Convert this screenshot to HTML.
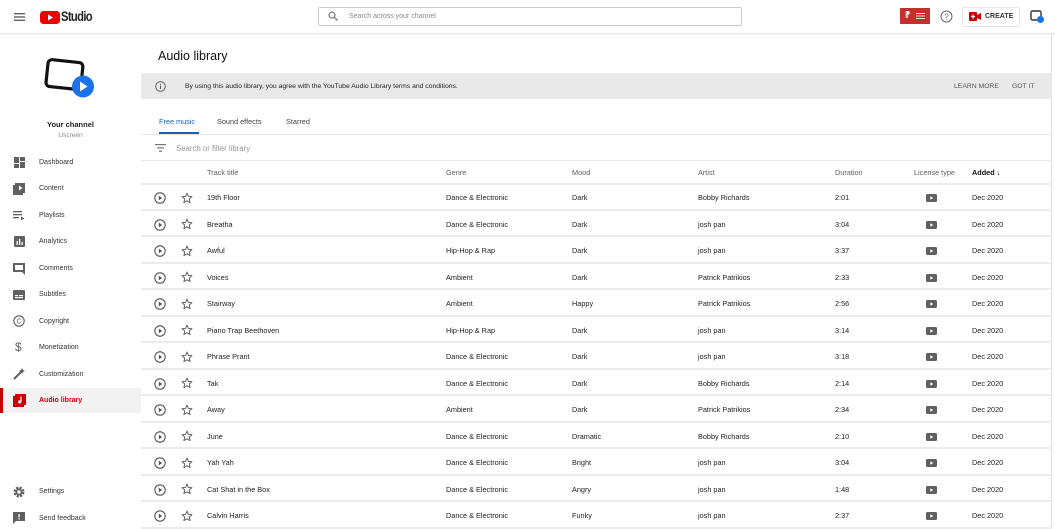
<!DOCTYPE html>
<html><head><meta charset="utf-8">
<style>
*{margin:0;padding:0;box-sizing:border-box}
body{width:1055px;height:529px;overflow:hidden;background:#fff;font-family:"Liberation Sans",Arial,sans-serif;color:#0d0d0d;position:relative}
.a{position:absolute;white-space:nowrap}
.sb{font-size:7px;color:#333}
.row{position:absolute;left:141px;width:911px;height:26.5px;border-bottom:2px solid #ececec}
.c{position:absolute;top:1px;line-height:26px;font-size:7.3px;color:#222}
.h{color:#606060}
</style></head><body>
<div class="a" style="left:0;top:0;width:1055px;height:34px;border-bottom:1px solid #e5e5e5;box-shadow:0 1px 2px rgba(0,0,0,.06)"></div>
<svg class="a" style="left:14px;top:13px" width="11" height="8"><rect y="0" width="11" height="1.4" fill="#606060"/><rect y="3.3" width="11" height="1.4" fill="#606060"/><rect y="6.6" width="11" height="1.4" fill="#606060"/></svg>
<svg class="a" style="left:40px;top:11px" width="20" height="13"><rect width="20" height="13" rx="3.5" fill="#e00"/><path d="M8 3.5L13 6.5L8 9.5Z" fill="#fff"/></svg>
<div class="a" style="left:61px;top:8px;font-size:14px;font-weight:bold;letter-spacing:-0.8px;color:#222;transform:scaleX(.8);transform-origin:left">Studio</div>
<div class="a" style="left:318px;top:7px;width:424px;height:19px;border:1px solid #ccc;border-radius:2px"></div>
<svg class="a" style="left:328px;top:11px" width="10" height="10"><circle cx="4" cy="4" r="3" stroke="#777" stroke-width="1.2" fill="none"/><path d="M6.2 6.2L9.5 9.5" stroke="#777" stroke-width="1.3"/></svg>
<div class="a" style="left:349px;top:13px;font-size:7px;color:#888">Search across your channel</div>
<div class="a" style="left:900px;top:8px;width:30px;height:16px;background:#c4302b;border-radius:1px"></div>
<div class="a" style="left:905px;top:10px;font-size:8px;font-weight:bold;color:#fff">⁋</div>
<svg class="a" style="left:916px;top:13px" width="9" height="6"><rect width="9" height="1" fill="#fff" opacity=".8"/><rect y="2.5" width="9" height="1" fill="#fff" opacity=".8"/><rect y="5" width="9" height="1" fill="#fff" opacity=".8"/></svg>
<svg class="a" style="left:940px;top:10px" width="13" height="13"><circle cx="6.5" cy="6.5" r="5.5" stroke="#666" stroke-width="1" fill="none"/><text x="6.5" y="9.3" font-size="8" text-anchor="middle" fill="#666" font-family="Liberation Sans">?</text></svg>
<div class="a" style="left:962px;top:7px;width:58px;height:20px;border:1px solid #e5e5e5;border-radius:2px"></div>
<svg class="a" style="left:969px;top:12px" width="12" height="9"><rect width="8" height="9" rx="1" fill="#c00"/><path d="M8 3L12 1V8L8 6Z" fill="#c00"/><path d="M4 2.5V6.5M2 4.5H6" stroke="#fff" stroke-width="1.2"/></svg>
<div class="a" style="left:985px;top:13px;font-size:7px;font-weight:bold;color:#333">CREATE</div>
<svg class="a" style="left:1030px;top:9px" width="15" height="15"><rect x="1" y="2" width="10" height="9" rx="1.5" stroke="#333" stroke-width="1.4" fill="none"/><circle cx="10.5" cy="10.5" r="3.5" fill="#1a73e8"/></svg>

<svg class="a" style="left:44px;top:58px" width="52" height="42"><rect x="3" y="3" width="35" height="27" rx="4" transform="rotate(6 20 16)" stroke="#111" stroke-width="3.2" fill="none"/><circle cx="39" cy="28.5" r="11" fill="#1a73e8"/><path d="M36 23.5L43.5 28.5L36 33.5Z" fill="#fff"/></svg>
<div class="a" style="left:0;width:141px;top:120px;text-align:center;font-size:7.5px;font-weight:bold;color:#222">Your channel</div>
<div class="a" style="left:0;width:141px;top:132px;text-align:center;font-size:6.5px;color:#888">Uscreen</div>

<div class="a" style="left:0;top:388px;width:141px;height:25px;background:#f2f2f2"></div>
<div class="a" style="left:0;top:388px;width:3px;height:25px;background:#c00"></div>

<svg class="a" style="left:14px;top:157px" width="11" height="11" fill="#606060"><rect width="5" height="6"/><rect x="6" width="5" height="4"/><rect y="7" width="5" height="4"/><rect x="6" y="5" width="5" height="6"/></svg>
<div class="a sb" style="left:39px;top:159px">Dashboard</div>
<svg class="a" style="left:13px;top:183px" width="12" height="12" fill="#606060"><rect x="0" y="2" width="2" height="10"/><rect x="0" y="10" width="10" height="2"/><rect x="2" y="0" width="10" height="10"/><path d="M6 2.5L9.5 5L6 7.5Z" fill="#fff"/></svg>
<div class="a sb" style="left:39px;top:185px">Content</div>
<svg class="a" style="left:13px;top:211px" width="12" height="9" fill="#606060"><rect width="9" height="1.3"/><rect y="3" width="9" height="1.3"/><rect y="6" width="6" height="1.3"/><path d="M8 5.5L11.5 7.5L8 9.5Z"/></svg>
<div class="a sb" style="left:39px;top:212px">Playlists</div>
<svg class="a" style="left:14px;top:236px" width="11" height="11"><rect width="11" height="11" rx="1" fill="#606060"/><rect x="2.5" y="5" width="1.3" height="4" fill="#fff"/><rect x="5" y="3" width="1.3" height="6" fill="#fff"/><rect x="7.5" y="6" width="1.3" height="3" fill="#fff"/></svg>
<div class="a sb" style="left:39px;top:238px">Analytics</div>
<svg class="a" style="left:13px;top:263px" width="12" height="12"><path d="M0 0H12V12L9 9H0Z" fill="#606060"/><rect x="2" y="2" width="8" height="5" fill="#fff"/></svg>
<div class="a sb" style="left:39px;top:265px">Comments</div>
<svg class="a" style="left:13px;top:290px" width="12" height="10"><rect width="12" height="10" rx="1" fill="#606060"/><rect x="2" y="5" width="3" height="1.2" fill="#fff"/><rect x="6" y="5" width="4" height="1.2" fill="#fff"/><rect x="2" y="7" width="8" height="1.2" fill="#fff"/></svg>
<div class="a sb" style="left:39px;top:291px">Subtitles</div>
<svg class="a" style="left:13px;top:315px" width="12" height="12"><circle cx="6" cy="6" r="5.2" stroke="#606060" stroke-width="1.1" fill="none"/><text x="6" y="8.5" font-size="7" text-anchor="middle" fill="#606060" font-family="Liberation Sans">C</text></svg>
<div class="a sb" style="left:39px;top:318px">Copyright</div>
<div class="a" style="left:15px;top:340px;font-size:12px;color:#606060">$</div>
<div class="a sb" style="left:39px;top:344px">Monetization</div>
<svg class="a" style="left:13px;top:367px" width="13" height="13"><path d="M1 12L8 5" stroke="#606060" stroke-width="2"/><path d="M9 1L10 3L12 4L10 5L9 7L8 5L6 4L8 3Z" fill="#606060"/></svg>
<div class="a sb" style="left:39px;top:371px">Customization</div>
<svg class="a" style="left:13px;top:394px" width="13" height="13"><rect x="0" y="2" width="2" height="11" fill="#c00"/><rect x="0" y="11" width="11" height="2" fill="#c00"/><rect x="2" y="0" width="11" height="11" rx="1" fill="#c00"/><path d="M8 2.5V7.5" stroke="#fff" stroke-width="1.2"/><circle cx="6.8" cy="7.8" r="1.6" fill="#fff"/></svg>
<div class="a sb" style="left:39px;top:397px;color:#c00;font-weight:bold">Audio library</div>
<svg class="a" style="left:13px;top:486px" width="12" height="12"><circle cx="6" cy="6" r="4" stroke="#606060" stroke-width="3" stroke-dasharray="2 1.2" fill="none"/><circle cx="6" cy="6" r="3.5" fill="#606060"/><circle cx="6" cy="6" r="1.7" fill="#fff"/></svg>
<div class="a sb" style="left:39px;top:488px">Settings</div>
<svg class="a" style="left:13px;top:512px" width="12" height="12"><path d="M0 0H12V9H3L0 12Z" fill="#606060"/><rect x="5.4" y="2" width="1.3" height="3.5" fill="#fff"/><rect x="5.4" y="6.3" width="1.3" height="1.3" fill="#fff"/></svg>
<div class="a sb" style="left:39px;top:515px">Send feedback</div>

<div class="a" style="left:1051px;top:35px;width:1px;height:494px;background:#ddd"></div>
<div class="a" style="left:158px;top:49px;font-size:12.5px;color:#111">Audio library</div>
<div class="a" style="left:141px;top:73px;width:911px;height:26px;background:#e9e9e9"></div>
<svg class="a" style="left:155px;top:81px" width="11" height="11"><circle cx="5.5" cy="5.5" r="4.8" stroke="#555" stroke-width="0.9" fill="none"/><rect x="5" y="4.5" width="1" height="3.5" fill="#555"/><rect x="5" y="2.8" width="1" height="1" fill="#555"/></svg>
<div class="a" style="left:185px;top:83px;font-size:6.8px;color:#222">By using this audio library, you agree with the YouTube Audio Library terms and conditions.</div>
<div class="a" style="left:954px;top:83px;font-size:6.8px;color:#555">LEARN MORE</div>
<div class="a" style="left:1012px;top:83px;font-size:6.8px;color:#555">GOT IT</div>

<div class="a" style="left:159px;top:117px;font-size:7.3px;color:#1a5fb4">Free music</div>
<div class="a" style="left:159px;top:132px;width:40px;height:2px;background:#1a5fb4"></div>
<div class="a" style="left:217px;top:117px;font-size:7.3px;color:#444">Sound effects</div>
<div class="a" style="left:286px;top:117px;font-size:7.3px;color:#444">Starred</div>
<div class="a" style="left:141px;top:134px;width:911px;height:1px;background:#e5e5e5"></div>
<svg class="a" style="left:155px;top:144px" width="11" height="8" fill="#777"><rect width="11" height="1.2"/><rect x="2" y="3.3" width="7" height="1.2"/><rect x="4" y="6.6" width="3" height="1.2"/></svg>
<div class="a" style="left:176px;top:144px;font-size:7.8px;color:#999">Search or filter library</div>
<div class="a" style="left:141px;top:160px;width:911px;height:1px;background:#e5e5e5"></div>

<div class="row" style="top:160px;height:25px">
<div class="c h" style="left:66px;line-height:24px">Track title</div>
<div class="c h" style="left:305px;line-height:24px">Genre</div>
<div class="c h" style="left:431px;line-height:24px">Mood</div>
<div class="c h" style="left:557px;line-height:24px">Artist</div>
<div class="c h" style="left:694px;line-height:24px">Duration</div>
<div class="c h" style="left:773px;line-height:24px">License type</div>
<div class="c" style="left:831px;line-height:24px;font-weight:bold;color:#111">Added ↓</div>
</div>

<div id="rows"></div>
<script>
var d=[["19th Floor","Dance & Electronic","Dark","Bobby Richards","2:01"],
["Breatha","Dance & Electronic","Dark","josh pan","3:04"],
["Awful","Hip-Hop & Rap","Dark","josh pan","3:37"],
["Voices","Ambient","Dark","Patrick Patrikios","2:33"],
["Stairway","Ambient","Happy","Patrick Patrikios","2:56"],
["Piano Trap Beethoven","Hip-Hop & Rap","Dark","josh pan","3:14"],
["Phrase Prant","Dance & Electronic","Dark","josh pan","3:18"],
["Tak","Dance & Electronic","Dark","Bobby Richards","2:14"],
["Away","Ambient","Dark","Patrick Patrikios","2:34"],
["June","Dance & Electronic","Dramatic","Bobby Richards","2:10"],
["Yah Yah","Dance & Electronic","Bright","josh pan","3:04"],
["Cat Shat in the Box","Dance & Electronic","Angry","josh pan","1:48"],
["Calvin Harris","Dance & Electronic","Funky","josh pan","2:37"]];
var h="";
d.forEach(function(r,i){
var t=184+i*26.5;
h+='<div class="row" style="top:'+t+'px">'+
'<svg class="a" style="left:13px;top:8px" width="12" height="12"><circle cx="6" cy="6" r="5.2" stroke="#555" stroke-width="1.1" fill="none"/><path d="M4.8 3.6L8.2 6L4.8 8.4Z" fill="#555"/></svg>'+
'<svg class="a" style="left:40px;top:7.5px" width="12" height="12"><path d="M6 1L7.4 4.4L11 4.7L8.3 7L9.1 10.6L6 8.7L2.9 10.6L3.7 7L1 4.7L4.6 4.4Z" stroke="#555" stroke-width="0.9" fill="none" stroke-linejoin="round"/></svg>'+
'<div class="c" style="left:66px">'+r[0].replace("&","&amp;")+'</div>'+
'<div class="c" style="left:305px">'+r[1].replace("&","&amp;")+'</div>'+
'<div class="c" style="left:431px">'+r[2]+'</div>'+
'<div class="c" style="left:557px">'+r[3]+'</div>'+
'<div class="c" style="left:694px">'+r[4]+'</div>'+
'<svg class="a" style="left:785px;top:10px" width="11" height="8"><rect width="11" height="8" rx="1.5" fill="#606060"/><path d="M4.3 2.3L7.3 4L4.3 5.7Z" fill="#fff"/></svg>'+
'<div class="c" style="left:831px">Dec 2020</div></div>';
});
document.getElementById("rows").innerHTML=h;
</script>
</body></html>
